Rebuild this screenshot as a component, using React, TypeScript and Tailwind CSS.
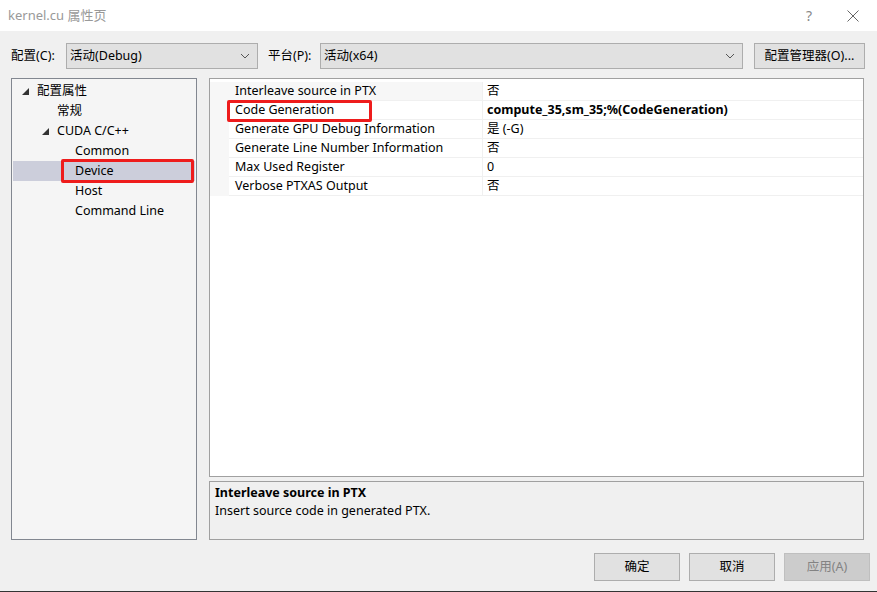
import React from 'react';

const font = { fontFamily: '"Noto Sans", "Noto Sans CJK SC", sans-serif' };

interface Prop {
    name: string;
    value: string;
    bold?: boolean;
    selected?: boolean;
    boxed?: boolean;
}

const props: Prop[] = [
    { name: 'Interleave source in PTX', value: '否', selected: true },
    { name: 'Code Generation', value: 'compute_35,sm_35;%(CodeGeneration)', bold: true, boxed: true },
    { name: 'Generate GPU Debug Information', value: '是 (-G)' },
    { name: 'Generate Line Number Information', value: '否' },
    { name: 'Max Used Register', value: '0' },
    { name: 'Verbose PTXAS Output', value: '否' },
];

function Chevron() {
    return (
        <svg width="10" height="6" viewBox="0 0 10 6" className="shrink-0">
            <path d="M1 1 L5 5 L9 1" fill="none" stroke="#555" strokeWidth="1" />
        </svg>
    );
}

function Arrow() {
    return (
        <svg width="7" height="7" viewBox="0 0 7 7" className="shrink-0">
            <path d="M7 0 L7 7 L0 7 Z" fill="#333" />
        </svg>
    );
}

function Select({ text, className }: { text: string; className: string }) {
    return (
        <div className={`h-[26px] flex items-center justify-between bg-[#e1e1e1] border border-[#adadad] pl-[3px] pr-[7px] ${className}`}>
            <span className="pt-[1px]">{text}</span>
            <Chevron />
        </div>
    );
}

function Btn({ text, disabled }: { text: string; disabled?: boolean }) {
    return (
        <div
            className={`w-[86px] h-[28px] flex items-center justify-center border ${
                disabled ? 'bg-[#cccccc] border-[#bfbfbf] text-[#838383]' : 'bg-[#e1e1e1] border-[#adadad] text-black'
            }`}
        >
            {text}
        </div>
    );
}

export default function App() {
    return (
        <div className="w-[877px] h-[592px] flex flex-col bg-[#f0f0f0] text-[12.5px] text-black overflow-hidden border-b border-[#333]" style={font}>
            {/* Title bar */}
            <div className="h-[31px] bg-white flex items-center justify-between pl-[8px] pr-[18px] shrink-0">
                <span className="text-[#999999] text-[13px]">kernel.cu 属性页</span>
                <div className="flex items-center gap-[35px] text-[#888]">
                    <span className="text-[14px]">?</span>
                    <svg width="12" height="12" viewBox="0 0 12 12">
                        <path d="M0.5 0.5 L11.5 11.5 M11.5 0.5 L0.5 11.5" stroke="#666" strokeWidth="1" />
                    </svg>
                </div>
            </div>

            <div className="flex-1 flex flex-col px-[11px]">
                {/* Config row */}
                <div className="flex items-center mt-[12px] h-[26px]">
                    <span className="w-[55px] pt-[1px]">配置(C):</span>
                    <Select text="活动(Debug)" className="w-[192px]" />
                    <span className="ml-[10px] w-[52px] pt-[1px]">平台(P):</span>
                    <Select text="活动(x64)" className="w-[423px]" />
                    <div className="ml-[11px] w-[111px] h-[26px] flex items-center justify-center bg-[#e1e1e1] border border-[#adadad] pt-[1px]">
                        配置管理器(O)...
                    </div>
                </div>

                {/* Main */}
                <div className="flex mt-[9px] gap-[12px]">
                    {/* Tree */}
                    <div className="w-[186px] h-[462px] bg-[#f5f5f5] border border-[#828790] pt-[2px] pl-[1px]">
                        <div className="h-[20px] flex items-center pl-[9px] gap-[8px]">
                            <Arrow />
                            <span>配置属性</span>
                        </div>
                        <div className="h-[20px] flex items-center pl-[44px]">常规</div>
                        <div className="h-[20px] flex items-center pl-[29px] gap-[8px]">
                            <Arrow />
                            <span>CUDA C/C++</span>
                        </div>
                        <div className="h-[20px] flex items-center pl-[62px]">Common</div>
                        <div className="relative h-[20px] flex items-center pl-[62px] bg-[#cccedb] mr-[1px]">
                            Device
                            <div className="absolute z-10 left-[48px] right-[1px] top-[-2px] bottom-[-2px] border-[3px] border-[#ee1c1c] rounded-[2px]" />
                        </div>
                        <div className="h-[20px] flex items-center pl-[62px]">Host</div>
                        <div className="h-[20px] flex items-center pl-[62px]">Command Line</div>
                    </div>

                    {/* Right side */}
                    <div className="w-[655px] flex flex-col gap-[4px]">
                        <div className="h-[399px] bg-white border border-[#a0a0a0] pt-[3px]">
                            {props.map((p) => (
                                <div key={p.name} className="h-[19px] flex">
                                    <div className="w-[19px] bg-[#f7f7f7]" />
                                    <div
                                        className={`relative w-[254px] flex items-center pl-[6px] border-b border-r border-[#f0f0f0] ${
                                            p.selected ? 'bg-[#f7f7f7]' : 'bg-white'
                                        }`}
                                    >
                                        {p.name}
                                        {p.boxed && (
                                            <div className="absolute z-10 left-[-2px] w-[145px] top-[-1px] bottom-[-3px] border-[3px] border-[#ee1c1c] rounded-[2px]" />
                                        )}
                                    </div>
                                    <div className={`flex-1 flex items-center pl-[4px] border-b border-[#f0f0f0] ${p.bold ? 'font-bold' : ''}`}>
                                        {p.value}
                                    </div>
                                </div>
                            ))}
                        </div>
                        <div className="h-[59px] border border-[#a0a0a0] bg-[#f0f0f0] px-[5px] pt-[2px] leading-[18px]">
                            <div className="font-bold">Interleave source in PTX</div>
                            <div>Insert source code in generated PTX.</div>
                        </div>
                    </div>
                </div>

                {/* Buttons */}
                <div className="flex justify-end gap-[9px] mt-[13px] mr-[-4px]">
                    <Btn text="确定" />
                    <Btn text="取消" />
                    <Btn text="应用(A)" disabled />
                </div>
            </div>
        </div>
    );
}
